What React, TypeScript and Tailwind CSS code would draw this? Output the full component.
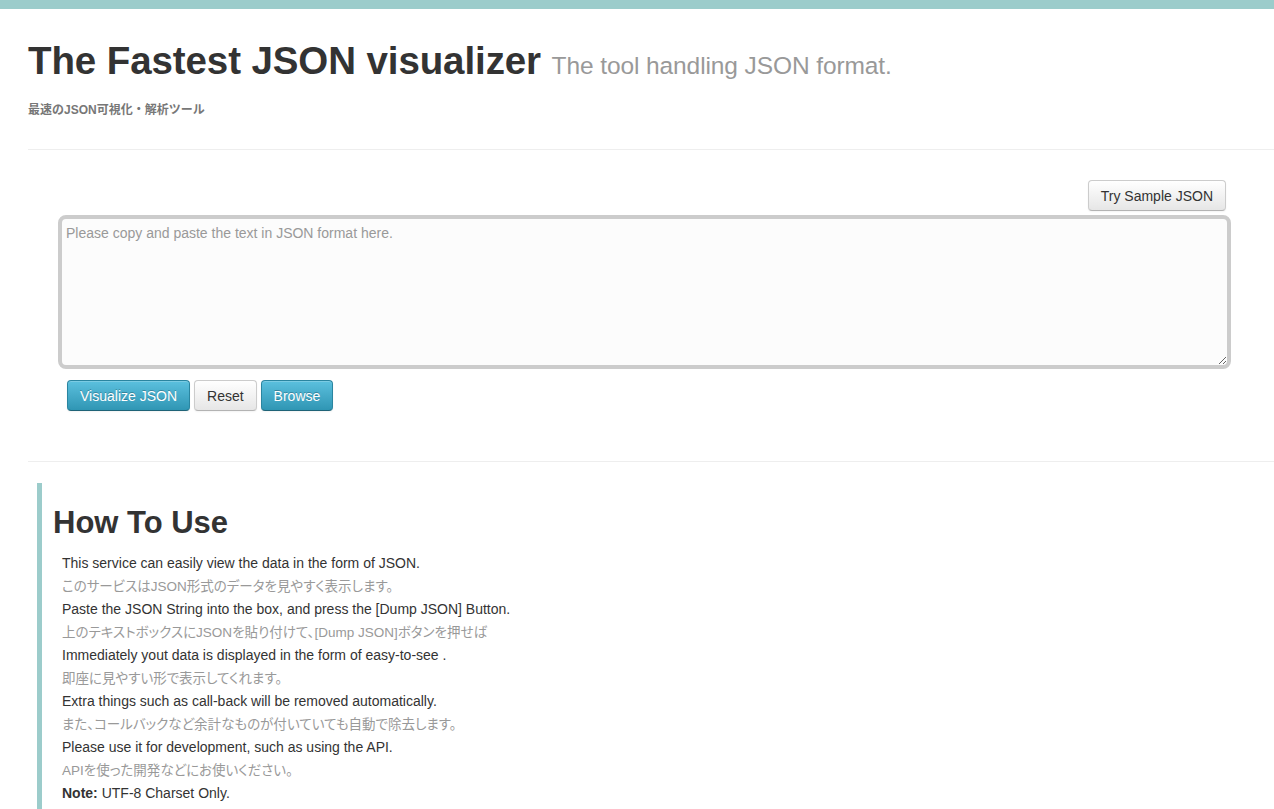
const lines: { text: string; ja?: boolean }[] = [
  { text: "This service can easily view the data in the form of JSON." },
  { text: "このサービスはJSON形式のデータを見やすく表示します。", ja: true },
  { text: "Paste the JSON String into the box, and press the [Dump JSON] Button." },
  { text: "上のテキストボックスにJSONを貼り付けて、[Dump JSON]ボタンを押せば", ja: true },
  { text: "Immediately yout data is displayed in the form of easy-to-see ." },
  { text: "即座に見やすい形で表示してくれます。", ja: true },
  { text: "Extra things such as call-back will be removed automatically." },
  { text: "また、コールバックなど余計なものが付いていても自動で除去します。", ja: true },
  { text: "Please use it for development, such as using the API." },
  { text: "APIを使った開発などにお使いください。", ja: true },
];

const btnDefault =
  "h-[31px] rounded-[4px] border border-[#cccccc] border-b-[#b3b3b3] bg-gradient-to-b from-white to-[#e6e6e6] px-[12px] text-[14px] leading-[20px] text-[#333333] shadow-[inset_0_1px_0_rgba(255,255,255,0.2),0_1px_2px_rgba(0,0,0,0.05)]";
const btnInfo =
  "h-[31px] rounded-[4px] border border-[#2a85a0] border-b-[#1f6377] bg-gradient-to-b from-[#5bc0de] to-[#2f96b4] px-[12px] text-[14px] leading-[20px] text-white [text-shadow:0_-1px_0_rgba(0,0,0,0.25)] shadow-[inset_0_1px_0_rgba(255,255,255,0.2),0_1px_2px_rgba(0,0,0,0.05)]";

const App = () => {
  return (
    <div className="min-h-screen bg-white font-['Liberation_Sans','Noto_Sans_CJK_JP',sans-serif] text-[14px] text-[#333333]">
      <div className="h-[9px] bg-[#9ccccb]" />
      <div className="pl-[28px]">
        <h1 className="mt-[32px] text-[38.5px] leading-[40px] font-bold tracking-[-0.1px] text-[#333333]">
          The Fastest JSON visualizer{" "}
          <small className="text-[24.5px] font-normal text-[#999999]">
            The tool handling JSON format.
          </small>
        </h1>
        <p className="mt-[15px] text-[12px] leading-[18px] font-bold text-[#777777]">
          最速のJSON可視化・解析ツール
        </p>
        <hr className="mt-[30px] border-0 border-t border-[#eeeeee]" />

        <div className="mt-[30px] ml-[30px] w-[1173px]">
          <div className="flex justify-end pr-[5px]">
            <button type="button" className={btnDefault}>
              Try Sample JSON
            </button>
          </div>
          <textarea
            placeholder="Please copy and paste the text in JSON format here."
            className="mt-[4px] block h-[154px] w-full rounded-[8px] border-[4px] border-[#cccccc] bg-[#fcfcfc] p-[4px] text-[14px] leading-[20px] outline-none placeholder:text-[#999999]"
          />
          <div className="mt-[11px] flex gap-[4px] pl-[9px]">
            <button type="button" className={btnInfo}>
              Visualize JSON
            </button>
            <button type="button" className={btnDefault}>
              Reset
            </button>
            <button type="button" className={btnInfo}>
              Browse
            </button>
          </div>
        </div>

        <hr className="mt-[50px] border-0 border-t border-[#eeeeee]" />

        <div className="mt-[21px] ml-[9px] border-l-[5px] border-[#9ccccb] pt-[20px] pb-[20px] pl-[11px]">
          <h2 className="text-[31px] leading-[40px] font-bold text-[#333333]">
            How To Use
          </h2>
          <div className="mt-[9px] pl-[9px] text-[14px] leading-[23px]">
            {lines.map((l, i) => (
              <p
                key={i}
                className={
                  l.ja
                    ? "text-[13.5px] text-[#999999] [font-feature-settings:'palt']"
                    : "text-[#333333]"
                }
              >
                {l.text}
              </p>
            ))}
            <p className="text-[#333333]">
              <strong>Note:</strong> UTF-8 Charset Only.
            </p>
          </div>
        </div>
      </div>
    </div>
  );
};

export default App;
